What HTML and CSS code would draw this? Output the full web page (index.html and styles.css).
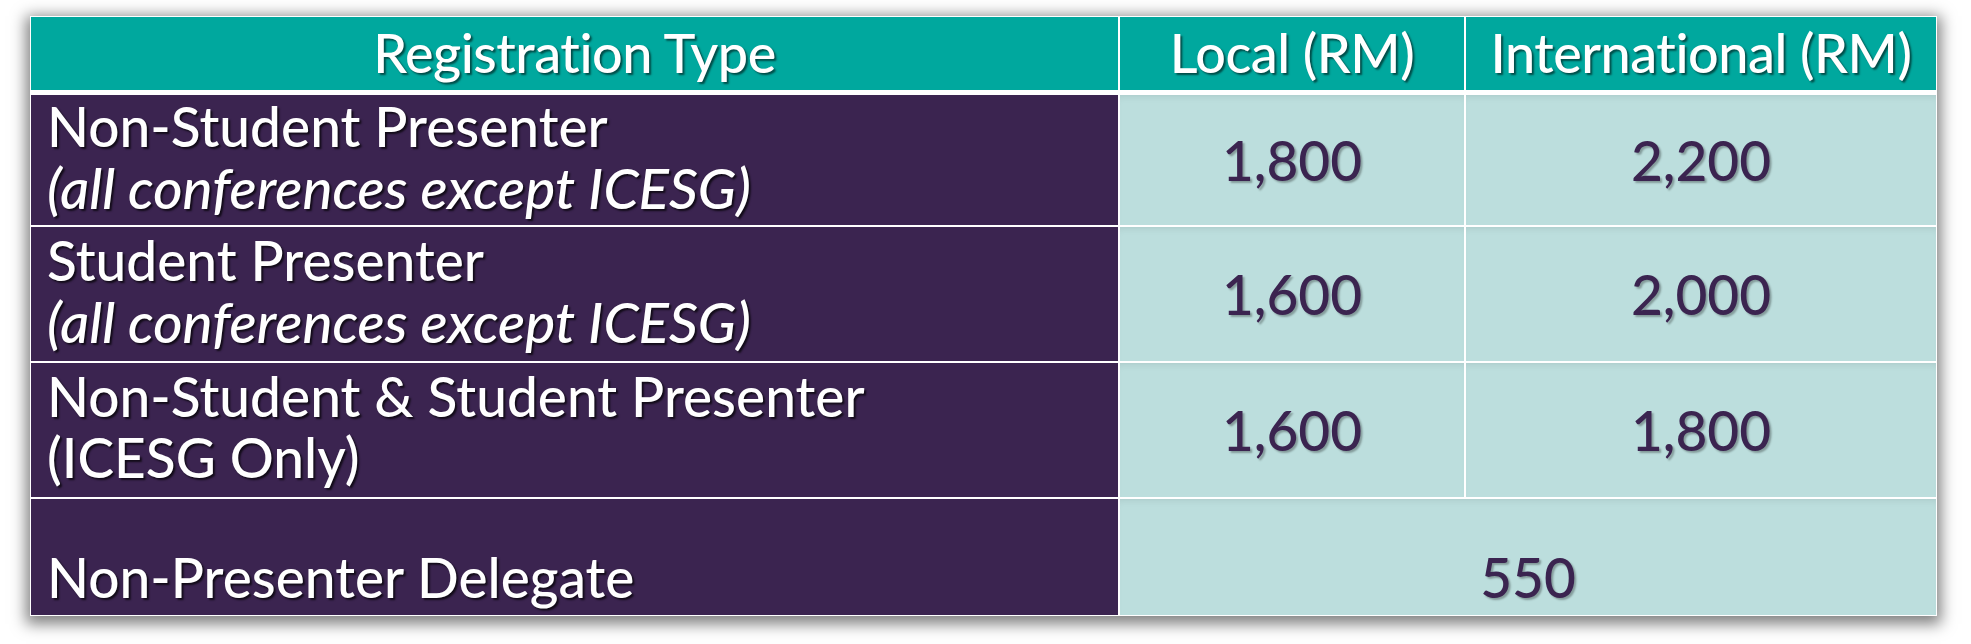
FILE: index.html
```html
<!DOCTYPE html>
<html lang="en">
<head>
<meta charset="utf-8">
<title>Registration Fees</title>
<link rel="stylesheet" href="styles.css">
</head>
<body>
<div class="page">
  <div class="fees">
    <div class="cell head">Registration Type</div>
    <div class="cell head">Local (RM)</div>
    <div class="cell head">International (RM)</div>

    <div class="cell label"><span>Non-Student Presenter</span><em>(all conferences except ICESG)</em></div>
    <div class="cell num">1,800</div>
    <div class="cell num">2,200</div>

    <div class="cell label"><span>Student Presenter</span><em>(all conferences except ICESG)</em></div>
    <div class="cell num">1,600</div>
    <div class="cell num">2,000</div>

    <div class="cell label"><span>Non-Student &amp; Student Presenter</span><span>(ICESG Only)</span></div>
    <div class="cell num">1,600</div>
    <div class="cell num">1,800</div>

    <div class="cell label bottom"><span>Non-Presenter Delegate</span></div>
    <div class="cell num bottom span2">550</div>
  </div>
</div>
</body>
</html>
```
FILE: styles.css
```css
html, body {
  margin: 0;
  padding: 0;
  background: #ffffff;
}

.page {
  padding: 16px 0 30px 30px;
}

.fees {
  display: grid;
  grid-template-columns: 1087px 344px 470px;
  grid-template-rows: 76px 130px 134px 134px 116px;
  gap: 2px;
  padding: 1px;
  width: max-content;
  background: #ffffff;
  box-shadow: 0 4px 14px 4px rgba(0, 0, 0, 0.5);
  font-family: Lato, "Open Sans", sans-serif;
  font-weight: 500;
}

.cell {
  display: flex;
  box-sizing: border-box;
}

.head {
  margin-bottom: 3px;
  background: #00a89e;
  color: #ffffff;
  font-size: 54px;
  justify-content: center;
  align-items: center;
  padding-bottom: 2px;
  letter-spacing: -0.5px;
  text-shadow: 2px 2px 2px rgba(0, 0, 0, 0.55);
}

.label {
  background: #3b2450;
  color: #ffffff;
  flex-direction: column;
  justify-content: center;
  padding: 0 0 6px 16px;
  font-size: 55px;
  line-height: 61px;
  text-shadow: 2px 2px 2px rgba(0, 0, 0, 0.7);
}

.label em {
  font-style: italic;
  font-size: 56.5px;
}

.num {
  background: #bcdedd;
  color: #3b2450;
  font-size: 55px;
  justify-content: center;
  align-items: center;
  text-shadow: 2px 2px 2px rgba(0, 0, 0, 0.3);
  box-shadow: inset 0 6px 8px -6px rgba(0, 0, 0, 0.12);
}

.bottom {
  padding-bottom: 7px;
}

.num.bottom {
  align-items: flex-end;
  justify-content: center;
  line-height: 61px;
}

.label.bottom {
  justify-content: flex-end;
}

.span2 {
  grid-column: span 2;
}
```
